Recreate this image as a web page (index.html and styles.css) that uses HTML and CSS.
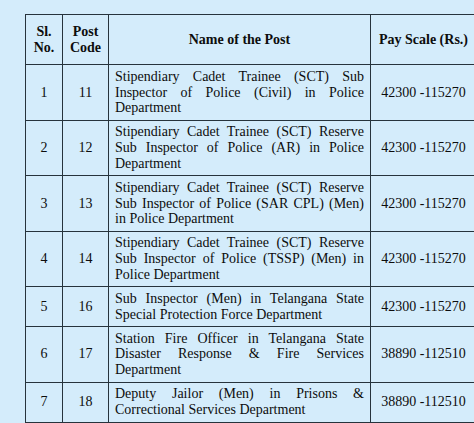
FILE: index.html
```html
<!DOCTYPE html>
<html lang="en">
<head>
<meta charset="utf-8">
<title>Posts and Pay Scales</title>
<link rel="stylesheet" href="styles.css">
</head>
<body>
<table class="posts">
  <colgroup>
    <col class="c-sl">
    <col class="c-code">
    <col class="c-name">
    <col class="c-pay">
  </colgroup>
  <thead>
    <tr>
      <th>Sl.<br>No.</th>
      <th>Post<br>Code</th>
      <th>Name of the Post</th>
      <th>Pay Scale (Rs.)</th>
    </tr>
  </thead>
  <tbody>
    <tr>
      <td class="num">1</td>
      <td class="num">11</td>
      <td class="name">Stipendiary Cadet Trainee (SCT) Sub Inspector of Police (Civil) in Police Department</td>
      <td class="pay">42300 -115270</td>
    </tr>
    <tr>
      <td class="num">2</td>
      <td class="num">12</td>
      <td class="name">Stipendiary Cadet Trainee (SCT) Reserve Sub Inspector of Police (AR) in Police Department</td>
      <td class="pay">42300 -115270</td>
    </tr>
    <tr>
      <td class="num">3</td>
      <td class="num">13</td>
      <td class="name">Stipendiary Cadet Trainee (SCT) Reserve Sub Inspector of Police (SAR CPL) (Men) in Police Department</td>
      <td class="pay">42300 -115270</td>
    </tr>
    <tr>
      <td class="num">4</td>
      <td class="num">14</td>
      <td class="name">Stipendiary Cadet Trainee (SCT) Reserve Sub Inspector of Police (TSSP) (Men) in Police Department</td>
      <td class="pay">42300 -115270</td>
    </tr>
    <tr>
      <td class="num">5</td>
      <td class="num">16</td>
      <td class="name">Sub Inspector (Men) in Telangana State Special Protection Force Department</td>
      <td class="pay">42300 -115270</td>
    </tr>
    <tr>
      <td class="num">6</td>
      <td class="num">17</td>
      <td class="name">Station Fire Officer in Telangana State Disaster Response &amp; Fire Services Department</td>
      <td class="pay">38890 -112510</td>
    </tr>
    <tr>
      <td class="num">7</td>
      <td class="num">18</td>
      <td class="name">Deputy Jailor (Men) in Prisons &amp; Correctional Services Department</td>
      <td class="pay">38890 -112510</td>
    </tr>
  </tbody>
</table>
</body>
</html>
```

FILE: styles.css
```css
html, body {
  margin: 0;
  padding: 0;
  overflow: hidden;
  background: #d4ecfb;
}

body {
  font-family: "Liberation Serif", "Times New Roman", serif;
  font-size: 14px;
  line-height: 15.67px;
  color: #0d0d0d;
}

.posts {
  margin: 14px 0 0 25px;
  border-collapse: collapse;
  table-layout: fixed;
  width: 451px;
  background: #d4ecfb;
}

.c-sl { width: 37px; }
.c-code { width: 46px; }
.c-name { width: 262px; }
.c-pay { width: 106px; }

.posts th,
.posts td {
  border: 1px solid #26333c;
  vertical-align: middle;
}

.posts th {
  font-weight: bold;
  text-align: center;
  padding: 9px 2px 9px;
  color: #0d0d0d;
}

.posts td {
  padding: 3.5px 6px 4px;
}

.posts td.num {
  text-align: center;
  padding-left: 2px;
  padding-right: 2px;
}

.posts td.name {
  text-align: justify;
}

.posts td.pay {
  text-align: center;
  padding-left: 2px;
  padding-right: 2px;
}
```
